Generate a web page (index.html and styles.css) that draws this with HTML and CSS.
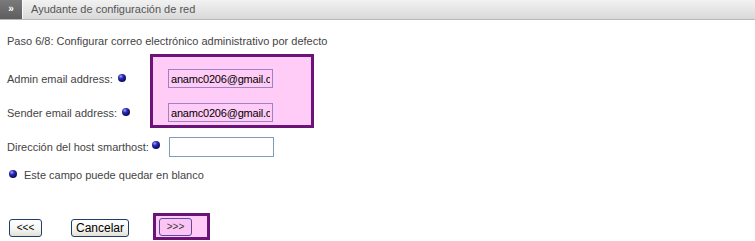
FILE: index.html
```html
<!DOCTYPE html>
<html>
<head>
<meta charset="utf-8">
<link rel="stylesheet" href="styles.css">
</head>
<body>
<div class="header">
  <div class="hicon">&raquo;</div>
  <div class="htitle">Ayudante de configuración de red</div>
</div>
<div class="content">
  <div class="step">Paso 6/8: Configurar correo electrónico administrativo por defecto</div>
  <div class="group">
    <div class="labels">
      <div class="label">Admin email address: <span class="dot"></span></div>
      <div class="label last">Sender email address: <span class="dot"></span></div>
    </div>
    <div class="hl">
      <input class="field pink" type="text" value="anamc0206@gmail.com">
      <input class="field pink" type="text" value="anamc0206@gmail.com">
    </div>
  </div>
  <div class="row3">
    <div class="label l3">Dirección del host smarthost: <span class="dot"></span></div>
    <input class="field plain" type="text" value="">
  </div>
  <div class="note"><span class="dot"></span> Este campo puede quedar en blanco</div>
  <div class="buttons">
    <button class="btn b1">&lt;&lt;&lt;</button>
    <button class="btn b2">Cancelar</button>
    <div class="hlb"><button class="btn pinkbtn">&gt;&gt;&gt;</button></div>
  </div>
</div>
</body>
</html>
```
FILE: styles.css
```css
body {
  margin: 0;
  font-family: "Liberation Sans", Arial, sans-serif;
  font-size: 11px;
  color: #555;
  background: #fff;
}
.header {
  display: flex;
  height: 19px;
  border-bottom: 1px solid #b8b8b8;
  background: linear-gradient(#f2f2f2, #d9d9d9);
}
.hicon {
  width: 22px;
  background: linear-gradient(#7a7a7a, #5e5e5e);
  color: #fff;
  font-weight: bold;
  font-size: 10px;
  text-align: center;
  line-height: 17px;
  border-right: 1px solid #fafafa;
}
.htitle {
  padding-left: 8px;
  line-height: 19px;
  color: #555;
}
.content {
  padding-left: 7px;
}
.step {
  margin-top: 14px;
  line-height: 14px;
  color: #444;
}
.group {
  display: flex;
  align-items: flex-start;
  margin-top: 6px;
}
.labels {
  width: 143px;
  padding-top: 16px;
}
.label {
  height: 19px;
  line-height: 19px;
  margin-bottom: 15px;
  color: #444;
  display: flex;
  align-items: center;
  gap: 5px;
  white-space: nowrap;
}
.label.last { margin-bottom: 0; }
.dot {
  display: inline-block;
  flex: none;
  width: 8px;
  height: 8px;
  border-radius: 50%;
  background: radial-gradient(circle at 35% 30%, #a0a6ff 0, #2a2ab8 30%, #10106e 65%, #000018 100%);
  position: relative;
  top: -2px;
}
.hl {
  display: flex;
  flex-direction: column;
  gap: 15px;
  border: 3px solid #6b1478;
  background: #ffccf7;
  padding: 12px 38px 3px 15px;
}
.field {
  width: 105px;
  height: 19px;
  box-sizing: border-box;
  margin: 0;
  padding: 0 2px;
  font-family: "Liberation Sans", Arial, sans-serif;
  font-size: 11px;
  letter-spacing: -0.2px;
  color: #000;
  outline: none;
}
.pink {
  border: 1px solid #9c84c4;
  background: #ffccf7;
}
.plain {
  border: 1px solid #7f9db9;
  background: #fff;
  height: 20px;
}
.row3 {
  display: flex;
  align-items: center;
  margin-top: 9px;
}
.l3 {
  width: 162px;
  gap: 3px;
  margin-bottom: 0;
}
.note {
  margin-top: 11px;
  margin-left: 2px;
  display: flex;
  align-items: center;
  gap: 7px;
  color: #444;
  line-height: 14px;
}
.note .dot { top: -1px; }
.buttons {
  display: flex;
  align-items: flex-start;
  margin-top: 31px;
  padding-left: 2px;
}
.btn {
  height: 18px;
  box-sizing: border-box;
  margin: 0;
  padding: 0;
  border: 1px solid #1f3e70;
  border-radius: 3px;
  background: linear-gradient(#ffffff, #f4f4f0 60%, #e2e0d6);
  font-family: "Liberation Sans", Arial, sans-serif;
  font-size: 10px;
  color: #000;
  line-height: 14px;
  text-align: center;
}
.b1 { width: 33px; margin-top: 6px; }
.b2 { width: 58px; margin-left: 29px; margin-top: 6px; font-size: 12px; }
.hlb {
  margin-left: 24px;
  border: 3px solid #6b1478;
  background: #ffccf7;
  padding: 2px 15px 0 3px;
  height: 19px;
}
.pinkbtn {
  width: 33px;
  background: #fcc4f4;
  border-color: #5a4a9a;
  color: #333;
}
```
